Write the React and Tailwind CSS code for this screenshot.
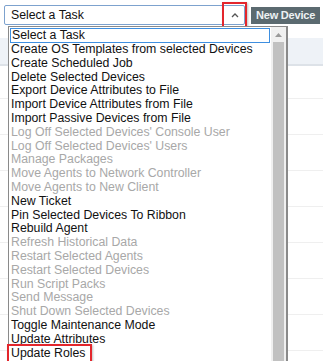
import React from 'react';

const tasks = [
  ['Create OS Templates from selected Devices', true],
  ['Create Scheduled Job', true],
  ['Delete Selected Devices', true],
  ['Export Device Attributes to File', true],
  ['Import Device Attributes from File', true],
  ['Import Passive Devices from File', true],
  ["Log Off Selected Devices' Console User", false],
  ["Log Off Selected Devices' Users", false],
  ['Manage Packages', false],
  ['Move Agents to Network Controller', false],
  ['Move Agents to New Client', false],
  ['New Ticket', true],
  ['Pin Selected Devices To Ribbon', true],
  ['Rebuild Agent', true],
  ['Refresh Historical Data', false],
  ['Restart Selected Agents', false],
  ['Restart Selected Devices', false],
  ['Run Script Packs', false],
  ['Send Message', false],
  ['Shut Down Selected Devices', false],
  ['Toggle Maintenance Mode', true],
  ['Update Attributes', true],
  ['Update Roles', true],
];

const App = () => {
  return (
    <div className="relative w-[323px] h-[361px] overflow-hidden bg-white font-['Liberation_Sans',Arial,sans-serif] text-[12.3px]">
      {/* Toolbar */}
      <div className="flex items-start pl-[4px] pt-[5px] h-[38px]">
        <div className="relative w-[241px] h-[20px] border border-[#7da2ce] rounded-[2px] bg-white flex items-center pl-[6px] text-[#111]">
          <span>Select a Task</span>
          <svg className="absolute left-[226px] top-[7px]" width="8" height="5" viewBox="0 0 8 5">
            <path d="M1 4 L4 1 L7 4" fill="none" stroke="#555" strokeWidth="1.3" />
          </svg>
        </div>
        <button className="ml-[6px] mt-[2px] h-[17px] px-[5px] bg-[#5b6a70] text-[#eef2f3] text-[11px] font-bold leading-[17px] tracking-[-0.2px]">
          New Device
        </button>
      </div>

      {/* Background grid */}
      <div className="h-[28px] bg-[#eef2f7] border-b-2 border-[#dde2e8]" />
      <div className="flex flex-col">
        <div className="h-[33px] border-b border-[#efefef]" />
        {[0, 1, 2, 3, 4, 5, 6].map((i) => (
          <div key={i} className="h-[36px] border-b border-[#efefef]" />
        ))}
      </div>

      {/* Red highlight around arrow */}
      <div className="absolute left-[222px] top-[2px] w-[25px] h-[27px] border-2 border-[#e3262c] shadow-[1px_1px_2px_rgba(0,0,0,0.25)]" />

      {/* Dropdown list */}
      <div className="absolute left-[8px] top-[26px] w-[280px] h-[345px] bg-white border border-[#8a8a8a] border-r-2 flex">
        <div className="flex-1 flex flex-col pt-[1px]">
          <div className="ml-[1px] mr-[1px] h-[15px] border border-[#3e8fe0] leading-[13px] pl-[1px] text-[#111]">
            Select a Task
          </div>
          {tasks.map(([label, enabled]) => (
            <div
              key={label}
              className={`pl-[2px] leading-[13.8px] whitespace-nowrap ${enabled ? 'text-[#111]' : 'text-[#a8a8a8]'}`}
            >
              {label}
            </div>
          ))}
        </div>
        <div className="w-[15px] bg-[#f0f0f0] flex flex-col items-center">
          <svg className="mt-[6px]" width="7" height="4" viewBox="0 0 7 4">
            <path d="M0 4 L3.5 0 L7 4 Z" fill="#9a9a9a" />
          </svg>
          <div className="mt-[5px] w-[11px] flex-1 bg-[#c1c1c1]" />
        </div>
      </div>

      {/* Red highlight around Update Roles */}
      <div className="absolute left-[7px] top-[344px] w-[85px] h-[20px] border-2 border-[#e3262c] shadow-[1px_1px_2px_rgba(0,0,0,0.25)]" />
    </div>
  );
};

export default App;
